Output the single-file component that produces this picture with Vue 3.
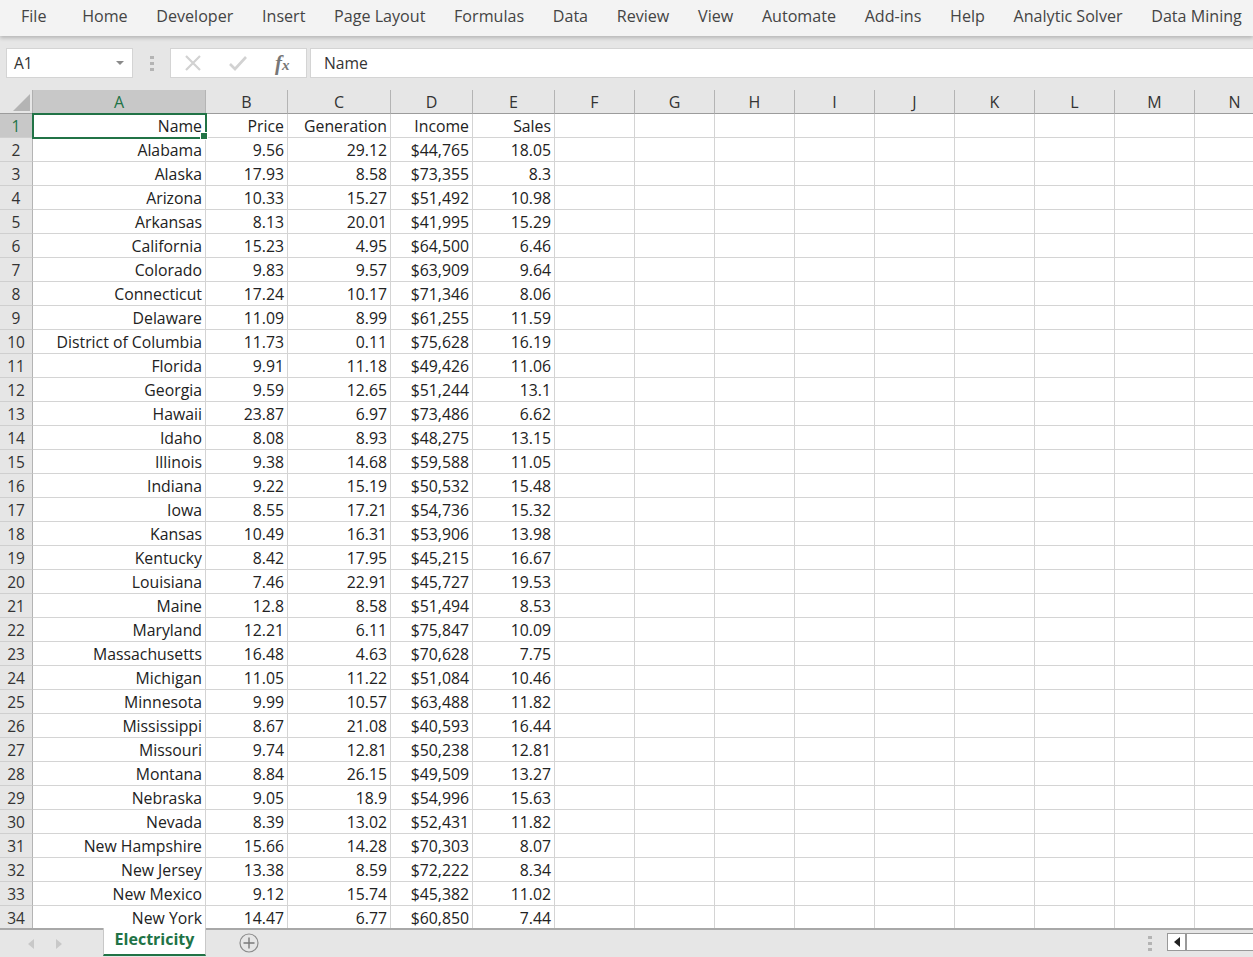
<script setup>
const tabs = ["File", "Home", "Developer", "Insert", "Page Layout", "Formulas", "Data", "Review", "View", "Automate", "Add-ins", "Help", "Analytic Solver", "Data Mining"];

const extraCols = ["F", "G", "H", "I", "J", "K", "L", "M", "N"];
const dataCols = ["A", "B", "C", "D", "E"];

const raw = `Name|Price|Generation|Income|Sales
Alabama|9.56|29.12|$44,765|18.05
Alaska|17.93|8.58|$73,355|8.3
Arizona|10.33|15.27|$51,492|10.98
Arkansas|8.13|20.01|$41,995|15.29
California|15.23|4.95|$64,500|6.46
Colorado|9.83|9.57|$63,909|9.64
Connecticut|17.24|10.17|$71,346|8.06
Delaware|11.09|8.99|$61,255|11.59
District of Columbia|11.73|0.11|$75,628|16.19
Florida|9.91|11.18|$49,426|11.06
Georgia|9.59|12.65|$51,244|13.1
Hawaii|23.87|6.97|$73,486|6.62
Idaho|8.08|8.93|$48,275|13.15
Illinois|9.38|14.68|$59,588|11.05
Indiana|9.22|15.19|$50,532|15.48
Iowa|8.55|17.21|$54,736|15.32
Kansas|10.49|16.31|$53,906|13.98
Kentucky|8.42|17.95|$45,215|16.67
Louisiana|7.46|22.91|$45,727|19.53
Maine|12.8|8.58|$51,494|8.53
Maryland|12.21|6.11|$75,847|10.09
Massachusetts|16.48|4.63|$70,628|7.75
Michigan|11.05|11.22|$51,084|10.46
Minnesota|9.99|10.57|$63,488|11.82
Mississippi|8.67|21.08|$40,593|16.44
Missouri|9.74|12.81|$50,238|12.81
Montana|8.84|26.15|$49,509|13.27
Nebraska|9.05|18.9|$54,996|15.63
Nevada|8.39|13.02|$52,431|11.82
New Hampshire|15.66|14.28|$70,303|8.07
New Jersey|13.38|8.59|$72,222|8.34
New Mexico|9.12|15.74|$45,382|11.02
New York|14.47|6.77|$60,850|7.44`;

const rows = raw.split("\n").map((line) => line.split("|"));
</script>

<template>
  <div class="app">
    <nav class="ribbon">
      <span v-for="tab in tabs" :key="tab" class="tab">{{ tab }}</span>
    </nav>

    <div class="formula-bar">
      <div class="name-box">
        <span>A1</span>
        <svg class="caret" width="8" height="4" viewBox="0 0 8 4"><path d="M0 0h8L4 4z" fill="#8a8a8a" /></svg>
      </div>
      <div class="grip"><i></i><i></i><i></i></div>
      <div class="fx-box">
        <svg width="18" height="18" viewBox="0 0 18 18"><path d="M2 2l14 14M16 2L2 16" stroke="#d2d2d2" stroke-width="2.2" fill="none" /></svg>
        <svg width="20" height="16" viewBox="0 0 20 16"><path d="M2 9l5 5L18 2" stroke="#d2d2d2" stroke-width="2.6" fill="none" /></svg>
        <span class="fx">f<sub>x</sub></span>
      </div>
      <div class="formula-input">Name</div>
    </div>

    <div class="sheet">
      <div class="corner"><svg width="17" height="17" viewBox="0 0 17 17"><path d="M17 0v17H0z" fill="#b4b4b4" /></svg></div>
      <div v-for="col in dataCols" :key="col" class="col-head" :class="{ selected: col === 'A' }">{{ col }}</div>
      <div v-for="col in extraCols" :key="col" class="col-head">{{ col }}</div>

      <template v-for="(row, i) in rows" :key="i">
        <div class="row-head" :class="{ selected: i === 0 }">{{ i + 1 }}</div>
        <div v-for="(val, j) in row" :key="j" class="cell" :class="{ active: i === 0 && j === 0 }">
          {{ val }}
          <span v-if="i === 0 && j === 0" class="handle"></span>
        </div>
        <div v-for="col in extraCols" :key="col" class="cell"></div>
      </template>
    </div>

    <div class="sheet-bar">
      <svg class="nav-arrow" width="6" height="10" viewBox="0 0 6 10"><path d="M6 0v10L0 5z" fill="#c8c8c8" /></svg>
      <svg class="nav-arrow next" width="6" height="10" viewBox="0 0 6 10"><path d="M0 0v10l6-5z" fill="#c8c8c8" /></svg>
      <div class="sheet-tab">Electricity</div>
      <svg class="add" width="20" height="20" viewBox="0 0 20 20"><circle cx="10" cy="10" r="9" fill="none" stroke="#8c8c8c" stroke-width="1.2" /><path d="M10 4.5v11M4.5 10h11" stroke="#7a7a7a" stroke-width="1.4" /></svg>
      <div class="spacer"></div>
      <div class="grip small"><i></i><i></i><i></i></div>
      <div class="scroll">
        <div class="scroll-btn"><svg width="6" height="10" viewBox="0 0 6 10"><path d="M6 0v10L0 5z" fill="#222" /></svg></div>
      </div>
    </div>
  </div>
</template>

<style scoped>
.app {
  width: 1253px;
  height: 957px;
  overflow: hidden;
  display: flex;
  flex-direction: column;
  background: #e6e6e6;
  font-family: "Open Sans", "Noto Sans", sans-serif;
  color: #222;
}

.ribbon {
  height: 36px;
  flex: none;
  display: flex;
  align-items: center;
  gap: 28.7px;
  padding: 0 0 5px 21px;
  box-sizing: border-box;
  background: #f3f3f3;
  box-shadow: 0 2px 4px rgba(0, 0, 0, 0.22);
  position: relative;
  white-space: nowrap;
  font-size: 16.1px;
  color: #444;
}

.tab:first-child {
  margin-right: 7px;
}

.formula-bar {
  height: 54px;
  flex: none;
  display: flex;
  align-items: flex-start;
  padding-top: 12px;
  padding-left: 6px;
  box-sizing: border-box;
  background: #e6e6e6;
}

.name-box {
  width: 127px;
  height: 30px;
  box-sizing: border-box;
  border: 1px solid #d4d4d4;
  background: #fff;
  display: flex;
  align-items: center;
  justify-content: space-between;
  padding: 0 8px 0 7px;
  font-size: 15.5px;
  color: #333;
}

.grip {
  width: 37px;
  height: 30px;
  display: flex;
  flex-direction: column;
  align-items: center;
  justify-content: center;
  gap: 3px;
}

.grip i {
  width: 4px;
  height: 3px;
  background: #b4b4b4;
}

.fx-box {
  width: 137px;
  height: 30px;
  box-sizing: border-box;
  border: 1px solid #d4d4d4;
  background: #fff;
  display: flex;
  align-items: center;
  gap: 26px;
  padding-left: 13px;
}

.fx {
  font-family: "Liberation Serif", serif;
  font-style: italic;
  font-weight: 700;
  font-size: 21px;
  color: #777;
  line-height: 1;
  margin-left: 1px;
}

.fx sub {
  font-size: 15px;
  vertical-align: baseline;
}

.formula-input {
  flex: 1;
  height: 30px;
  margin-left: 3px;
  box-sizing: border-box;
  border: 1px solid #d4d4d4;
  border-right: none;
  background: #fff;
  display: flex;
  align-items: center;
  padding-left: 13px;
  font-size: 15.7px;
  color: #333;
}

.sheet {
  height: 838px;
  flex: none;
  overflow: hidden;
  display: grid;
  grid-template-columns: 33px 173px 82px 103px 82px 82px repeat(9, 80px);
  grid-template-rows: 24px;
  grid-auto-rows: 24px;
  background: #fff;
  font-size: 15.8px;
  color: #222;
}

.corner {
  background: #e6e6e6;
  border-right: 1px solid #b0b0b0;
  border-bottom: 1px solid #9c9c9c;
  box-sizing: border-box;
  display: flex;
  align-items: flex-end;
  justify-content: flex-end;
  padding: 0 2px 2px 0;
}

.col-head {
  background: #e6e6e6;
  border-right: 1px solid #b4b4b4;
  border-bottom: 1px solid #9c9c9c;
  box-sizing: border-box;
  display: flex;
  align-items: center;
  justify-content: center;
  font-size: 16px;
  color: #333;
}

.col-head.selected {
  background: #c8c8c8;
  color: #217346;
}

.row-head {
  background: #e6e6e6;
  border-right: 1px solid #b4b4b4;
  border-bottom: 1px solid #cfcfcf;
  box-sizing: border-box;
  display: flex;
  align-items: center;
  justify-content: center;
  font-size: 15.5px;
  color: #333;
}

.row-head.selected {
  background: #c8c8c8;
  color: #217346;
}

.cell {
  position: relative;
  border-right: 1px solid #d4d4d4;
  border-bottom: 1px solid #d4d4d4;
  box-sizing: border-box;
  padding-right: 3px;
  text-align: right;
  line-height: 24px;
  white-space: nowrap;
}

.cell.active {
  outline: 2px solid #217346;
  outline-offset: -1px;
  z-index: 1;
}

.handle {
  position: absolute;
  right: -3px;
  bottom: -3px;
  width: 6px;
  height: 6px;
  box-sizing: content-box;
  background: #217346;
  border: 1px solid #fff;
}

.sheet-bar {
  flex: 1;
  position: relative;
  display: flex;
  align-items: flex-start;
  background: #e6e6e6;
  border-top: 2px solid #a8a8a8;
  box-sizing: border-box;
}

.nav-arrow {
  margin: 9px 0 0 28px;
  flex: none;
}

.nav-arrow.next {
  margin-left: 22px;
}

.sheet-tab {
  margin: -2px 0 0 41px;
  width: 103px;
  height: 28px;
  box-sizing: border-box;
  background: #fff;
  border-left: 1px solid #c8c8c8;
  border-right: 1px solid #c8c8c8;
  border-bottom: 2px solid #217346;
  text-align: center;
  line-height: 23px;
  font-weight: 700;
  font-size: 16px;
  color: #217346;
}

.add {
  margin: 3px 0 0 33px;
  flex: none;
}

.spacer {
  flex: 1;
}

.grip.small {
  width: 8px;
  height: 26px;
  margin-right: 13px;
}

.scroll {
  width: 86px;
  height: 18px;
  margin-top: 3px;
  box-sizing: border-box;
  background: #fff;
  border: 1px solid #999;
  border-right: none;
}

.scroll-btn {
  width: 19px;
  height: 16px;
  box-sizing: border-box;
  border-right: 2px solid #999;
  display: flex;
  align-items: center;
  justify-content: center;
}
</style>
